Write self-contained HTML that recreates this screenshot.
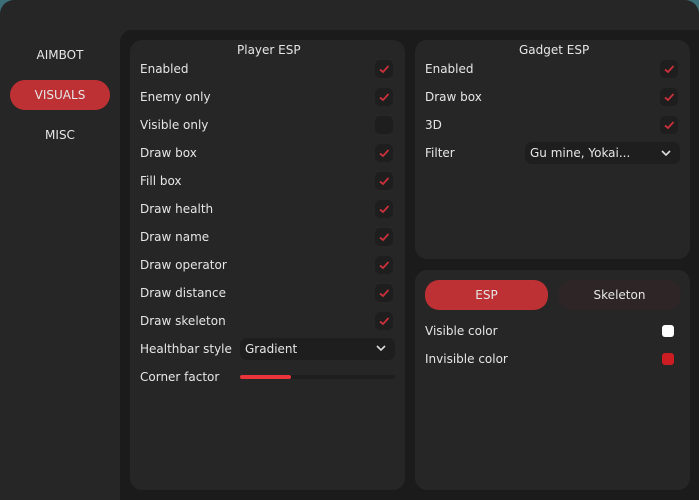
<!DOCTYPE html>
<html><head><style>
*{margin:0;padding:0;box-sizing:border-box}
body{width:699px;height:500px;background:#3d6f78;overflow:hidden;font-family:"DejaVu Sans","Liberation Sans",sans-serif;font-size:12px;color:#e6e6e6;position:relative}
.win{position:absolute;left:0;top:0;width:699px;height:500px;background:#262626;border-radius:14px 14px 0 0}
.inner{position:absolute;left:120px;top:30px;width:579px;height:470px;background:#1b1b1b;border-radius:12px 0 0 0}
.p{position:absolute;background:#262626;border-radius:12px}
.t{position:absolute;transform:translateY(-50%);white-space:nowrap}
.cb{position:absolute;width:18px;height:18px;background:#1e1e1e;border-radius:5px}
.cb svg{position:absolute;left:3px;top:3px}
.dd{position:absolute;background:#1e1e1e;border-radius:7px;height:22px}
.nav{position:absolute;left:10px;width:100px;height:30px;text-align:center;line-height:30px;font-size:12px}
</style></head><body>
<div class="win"></div>
<div class="nav" style="top:40px">AIMBOT</div>
<div class="nav" style="top:80px;background:#bd3033;border-radius:15px">VISUALS</div>
<div class="nav" style="top:120px">MISC</div>
<div class="inner"></div>
<div class="p" style="left:130px;top:40px;width:275px;height:450px"></div>
<div class="p" style="left:415px;top:40px;width:275px;height:219px"></div>
<div class="p" style="left:415px;top:270px;width:275px;height:220px"></div>
<div class="t" style="left:237px;top:50px">Player ESP</div>
<div class="t" style="left:519px;top:50px">Gadget ESP</div>
<div id="rows"></div>
<div class="dd" style="left:240px;top:338px;width:155px"></div>
<div class="t" style="left:245px;top:349px">Gradient</div>
<svg style="position:absolute;left:376px;top:345px" width="10" height="7"><path d="M1 1L5 5L9 1" stroke="#ddd" stroke-width="1.6" fill="none"/></svg>
<div class="t" style="left:140px;top:349px">Healthbar style</div>
<div class="t" style="left:140px;top:377px">Corner factor</div>
<div style="position:absolute;left:240px;top:375px;width:155px;height:4px;background:#1e1e1e;border-radius:2px"></div>
<div style="position:absolute;left:240px;top:375px;width:51px;height:4px;background:#e8343a;border-radius:2px"></div>
<div class="dd" style="left:525px;top:142px;width:155px"></div>
<div class="t" style="left:530px;top:153px">Gu mine, Yokai...</div>
<svg style="position:absolute;left:661px;top:150px" width="10" height="7"><path d="M1 1L5 5L9 1" stroke="#ddd" stroke-width="1.6" fill="none"/></svg>
<div class="t" style="left:425px;top:153px">Filter</div>
<div style="position:absolute;left:425px;top:280px;width:123px;height:30px;background:#bd3033;border-radius:14px;text-align:center;line-height:30px">ESP</div>
<div style="position:absolute;left:558px;top:280px;width:123px;height:30px;background:#2e2526;border-radius:14px;text-align:center;line-height:30px">Skeleton</div>
<div class="t" style="left:425px;top:331px">Visible color</div>
<div class="t" style="left:425px;top:359px">Invisible color</div>
<div style="position:absolute;left:662px;top:325px;width:12px;height:12px;background:#fff;border-radius:3px"></div>
<div style="position:absolute;left:662px;top:353px;width:12px;height:12px;background:#cc1e22;border-radius:3px"></div>
<script>
var L=[["Enabled",1],["Enemy only",1],["Visible only",0],["Draw box",1],["Fill box",1],["Draw health",1],["Draw name",1],["Draw operator",1],["Draw distance",1],["Draw skeleton",1]];
var R=[["Enabled",1],["Draw box",1],["3D",1]];
var h="",ck='<svg width="12" height="12"><path d="M2 6.5L5 9L10.5 3" stroke="#c8313a" stroke-width="1.8" fill="none"/></svg>';
function add(a,x,cx){a.forEach(function(r,i){var y=69+i*28;h+='<div class="t" style="left:'+x+'px;top:'+y+'px">'+r[0]+'</div><div class="cb" style="left:'+cx+'px;top:'+(y-9)+'px">'+(r[1]?ck:'')+'</div>';});}
add(L,140,375);add(R,425,660);
document.getElementById("rows").innerHTML=h;
</script>
</body></html>
